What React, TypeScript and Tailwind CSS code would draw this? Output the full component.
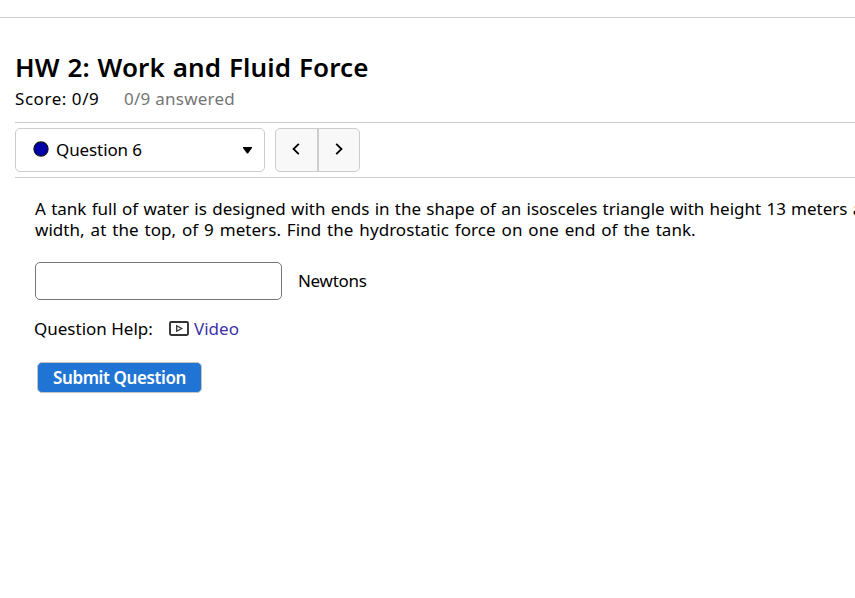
import React from "react";

export default function App() {
  return (
    <div className="h-[598px] w-full overflow-hidden bg-white pt-[17px] font-['Noto_Sans','Open_Sans',sans-serif] text-[17px] leading-[21px] text-black">
      <div className="border-t border-[#ccc]" />
      <main className="pl-[15px]">
        <h1 className="mt-[33px] h-8 text-[26px] leading-8 font-semibold whitespace-nowrap tracking-[0.1px] [word-spacing:1px]">
          HW 2: Work and Fluid Force
        </h1>
        <div className="mt-[5px] flex h-[21px] whitespace-nowrap">
          <span className="w-[109px] tracking-[0.55px]">Score: 0/9</span>
          <span className="tracking-[0.25px] text-[#757575]">0/9 answered</span>
        </div>
        <div className="mt-[13px] flex h-14 items-center gap-2.5 border-y border-[#ccc]">
          <button className="flex h-11 w-[250px] items-center rounded-[5px] border border-[#ccc] pr-3 pb-0.5 pl-[17px]">
            <svg width="16" height="16" viewBox="0 0 16 16">
              <circle cx="8" cy="8" r="7.1" fill="#0000a8" stroke="#111" strokeWidth="1.1" />
            </svg>
            <span className="ml-[7px] tracking-[-0.1px]">Question 6</span>
            <svg width="9" height="7" viewBox="0 0 9 7" className="mt-0.5 ml-auto">
              <path d="M0 0h9v1L5 6.5H4L0 1z" />
            </svg>
          </button>
          <div className="flex h-11 w-[85px] overflow-hidden rounded-[5px] border border-[#ccc] bg-[#f8f8f8]">
            <button className="flex w-[43px] items-center justify-center border-r-2 border-[#ccc] pr-px pb-0.5">
              <svg width="8" height="12" viewBox="0 0 8 12" fill="none" stroke="#000" strokeWidth="1.8">
                <path d="M6.8.8 1.5 6l5.3 5.2" />
              </svg>
            </button>
            <button className="flex w-10 items-center justify-center pb-0.5">
              <svg width="8" height="12" viewBox="0 0 8 12" fill="none" stroke="#000" strokeWidth="1.8">
                <path d="M1.2.8 6.5 6l-5.3 5.2" />
              </svg>
            </button>
          </div>
        </div>
        <section className="pt-5 pl-5">
          <p className="whitespace-nowrap">
            <span className="[word-spacing:0.85px]">A tank full of water is designed with ends in the shape of an isosceles triangle with height 13 meters and</span>
            <br />
            <span className="tracking-[0.05px] [word-spacing:1.4px]">width, at the top, of 9 meters. Find the hydrostatic force on one end of the tank.</span>
          </p>
          <div className="mt-[22px] flex h-[38px] items-center gap-4">
            <input className="h-[38px] w-[247px] rounded-[5px] border border-[#767676] outline-none" aria-label="Answer" />
            <span className="pb-0.5 tracking-[-0.3px]">Newtons</span>
          </div>
          <div className="-ml-px mt-[18px] flex h-[21px] items-center whitespace-nowrap">
            <span className="w-[135px]">Question Help:</span>
            <svg width="20" height="15" viewBox="0 0 20 15" fill="none" stroke="#333">
              <rect x="1" y="1" width="18" height="13" rx="1.2" strokeWidth="1.9" />
              <path d="M7.7 4.8v5.4l5-2.7z" strokeWidth="1.3" />
            </svg>
            <a className="ml-[5px] text-[#3c32a8]">Video</a>
          </div>
          <button className="mt-[23px] ml-[2px] flex h-[31px] w-[165px] items-center justify-center rounded-[5px] border border-[#c4c4c4] bg-[#1f74d4] font-semibold whitespace-nowrap text-white tracking-[-0.4px]">
            Submit Question
          </button>
        </section>
      </main>
    </div>
  );
}
